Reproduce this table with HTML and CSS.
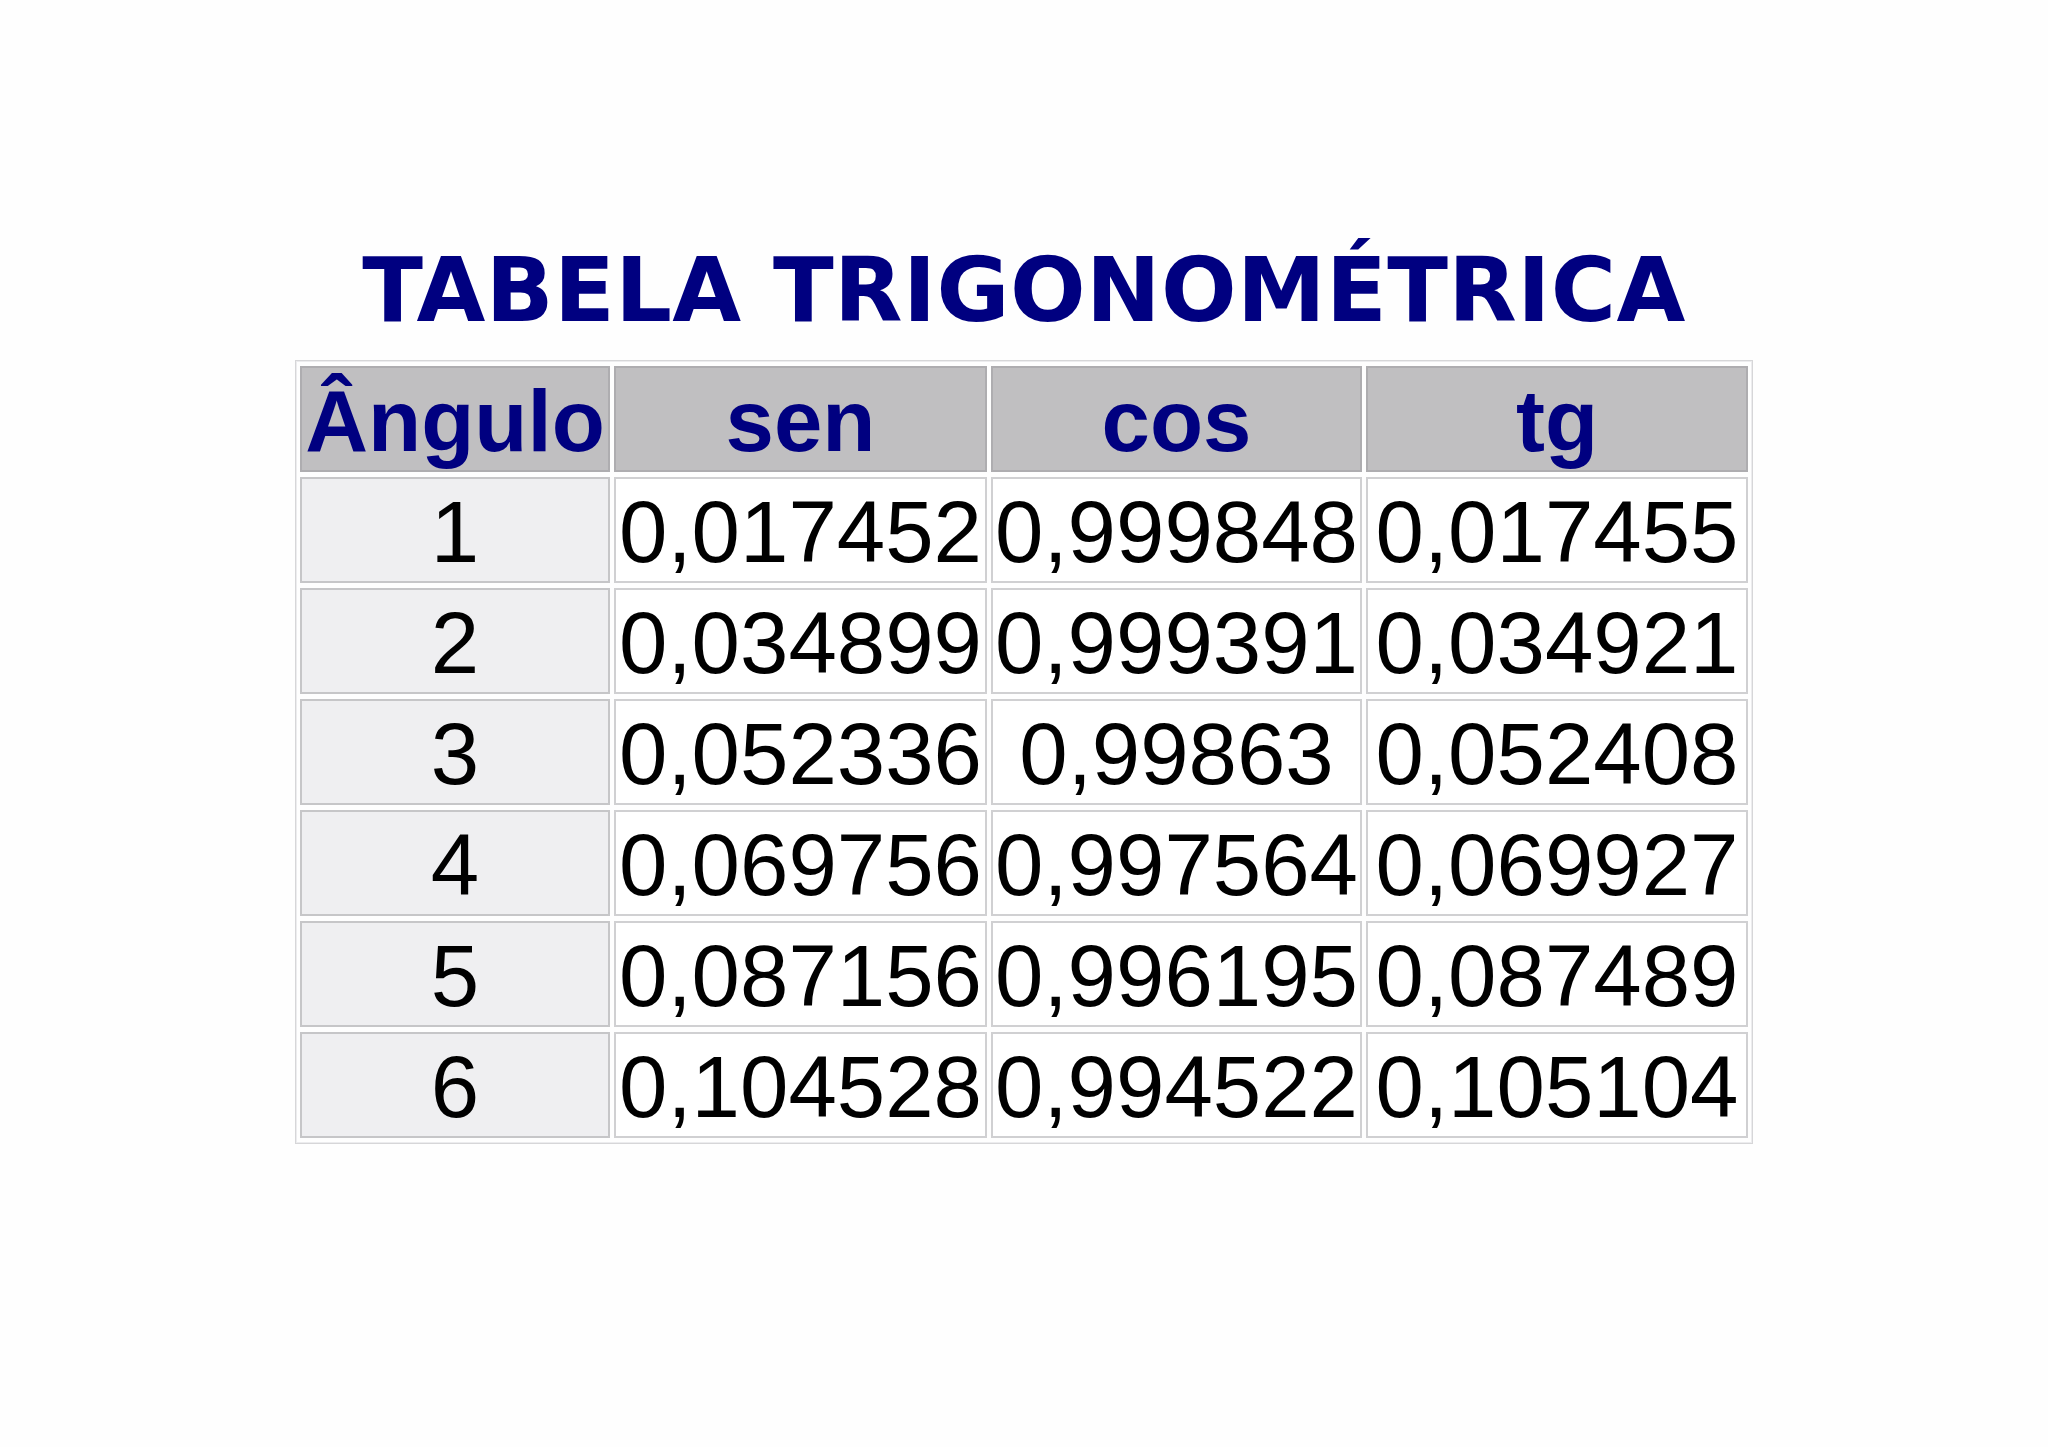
FILE: index.html
```html
<!DOCTYPE html>
<html lang="pt">
<head>
<meta charset="utf-8">
<title>Tabela Trigonométrica</title>
<link rel="stylesheet" href="styles.css">
</head>
<body>
<main class="page">
  <h1 class="title">TABELA TRIGONOMÉTRICA</h1>
  <table class="trig">
    <thead>
      <tr>
        <th class="c-ang">Ângulo</th>
        <th class="c-sen">sen</th>
        <th class="c-cos">cos</th>
        <th class="c-tg">tg</th>
      </tr>
    </thead>
    <tbody>
      <tr><td class="ang">1</td><td>0,017452</td><td>0,999848</td><td>0,017455</td></tr>
      <tr><td class="ang">2</td><td>0,034899</td><td>0,999391</td><td>0,034921</td></tr>
      <tr><td class="ang">3</td><td>0,052336</td><td>0,99863</td><td>0,052408</td></tr>
      <tr><td class="ang">4</td><td>0,069756</td><td>0,997564</td><td>0,069927</td></tr>
      <tr><td class="ang">5</td><td>0,087156</td><td>0,996195</td><td>0,087489</td></tr>
      <tr><td class="ang">6</td><td>0,104528</td><td>0,994522</td><td>0,105104</td></tr>
    </tbody>
  </table>
</main>
</body>
</html>
```
FILE: styles.css
```css
html, body {
  margin: 0;
  padding: 0;
  background: #fefefe;
}

.page {
  display: flex;
  flex-direction: column;
  align-items: center;
  padding-top: 246px;
  min-height: 1447px;
  box-sizing: border-box;
}

.title {
  margin: 0 0 25px;
  font-family: "DejaVu Sans", Verdana, sans-serif;
  font-weight: bold;
  font-size: 89px;
  line-height: 89px;
  color: #000080;
  letter-spacing: 0.4px;
  white-space: nowrap;
}

.trig {
  table-layout: fixed;
  border-collapse: separate;
  border-spacing: 4px 5px;
  border: 1px solid #d6d6d8;
  box-shadow: inset 0 0 0 1px #ececee;
  font-family: "Liberation Sans", Arial, sans-serif;
  font-size: 87px;
}

.trig th,
.trig td {
  box-sizing: border-box;
  height: 104px;
  padding: 3px 0 0;
  line-height: 99px;
  text-align: center;
  white-space: nowrap;
  overflow: visible;
}

.trig th {
  background: #c0bfc1;
  border: 2px solid #aeadb0;
  color: #000080;
  font-weight: bold;
}

.trig td {
  background: #ffffff;
  border: 2px solid #d0d0d2;
  color: #000000;
  font-weight: normal;
}

.trig td.ang {
  background: #efeff1;
  border-color: #c6c6c8;
}

.c-ang { width: 310px; }
.c-sen { width: 373px; }
.c-cos { width: 371px; }
.c-tg  { width: 382px; }
```
